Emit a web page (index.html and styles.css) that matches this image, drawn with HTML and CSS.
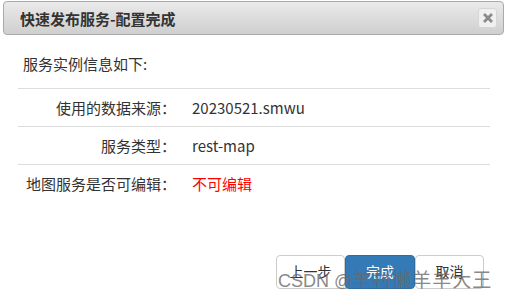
FILE: index.html
```html
<!DOCTYPE html>
<html>
<head>
<meta charset="utf-8">
<link rel="stylesheet" href="styles.css">
</head>
<body>
<div class="dialog">
  <div class="header">
    <span class="title">快速发布服务-配置完成</span>
    <span class="close">
      <svg width="10" height="10" viewBox="0 0 10 10"><path d="M2 2 L8 8 M8 2 L2 8" stroke="#8a8a8a" stroke-width="2.8" stroke-linecap="square"/></svg>
    </span>
  </div>
  <div class="body">
    <div class="intro">服务实例信息如下:</div>
    <div class="table">
      <div class="row"><div class="label">使用的数据来源：</div><div class="value">20230521.smwu</div></div>
      <div class="row"><div class="label">服务类型：</div><div class="value">rest-map</div></div>
      <div class="row"><div class="label">地图服务是否可编辑：</div><div class="value red">不可编辑</div></div>
    </div>
  </div>
  <div class="footer">
    <button class="btn">上一步</button>
    <button class="btn primary">完成</button>
    <button class="btn">取消</button>
  </div>
  <div class="watermark">CSDN @<span class="wm-cjk">羊村懒羊羊大王</span></div>
</div>
</body>
</html>
```
FILE: styles.css
```css
html, body {
  margin: 0;
  padding: 0;
  background: #fff;
}
body {
  font-family: "Noto Sans CJK SC", "Noto Sans", sans-serif;
  font-size: 15px;
  color: #333;
}
.dialog {
  position: relative;
  width: 505px;
  height: 301px;
}
.header {
  margin: 1px 1px 0 3px;
  height: 32px;
  border: 1px solid #aaa;
  border-radius: 4px;
  background: linear-gradient(#eaeaea, #cfcfcf);
  display: flex;
  align-items: center;
  justify-content: space-between;
  padding: 0 6px 0 16px;
}
.title {
  font-weight: bold;
  font-size: 15px;
  color: #333;
}
.close {
  width: 17px;
  height: 18px;
  border: 1px solid #d6d6d6;
  border-radius: 3px;
  background: #f0f0f0;
  display: flex;
  align-items: center;
  justify-content: center;
}
.body {
  padding: 19px 15px 0 18px;
}
.intro {
  padding-left: 5px;
  line-height: 20px;
  height: 34px;
}
.row {
  display: flex;
  height: 37px;
  border-top: 1px solid #ddd;
  align-items: center;
}
.label {
  width: 158px;
  text-align: right;
  padding-right: 16px;
}
.value {
  color: #333;
}
.red {
  color: #f00;
}
.footer {
  position: absolute;
  left: 276px;
  top: 254px;
  display: flex;
}
.btn {
  font-family: inherit;
  font-size: 14px;
  height: 34px;
  width: 69px;
  border: 1px solid #ccc;
  border-radius: 4px;
  background: #fff;
  color: #333;
  padding: 0 0 3px;
}
.primary {
  width: 70px;
  background: #337ab7;
  border-color: #2e6da4;
  color: #fff;
}
.watermark {
  position: absolute;
  left: 278px;
  top: 266px;
  font-family: "Liberation Sans", sans-serif;
  font-size: 18px;
  line-height: 24px;
  color: rgba(105, 105, 105, 0.8);
  white-space: nowrap;
}
.wm-cjk {
  font-family: "Noto Sans CJK SC", sans-serif;
  font-size: 19px;
  letter-spacing: 1px;
}
```
